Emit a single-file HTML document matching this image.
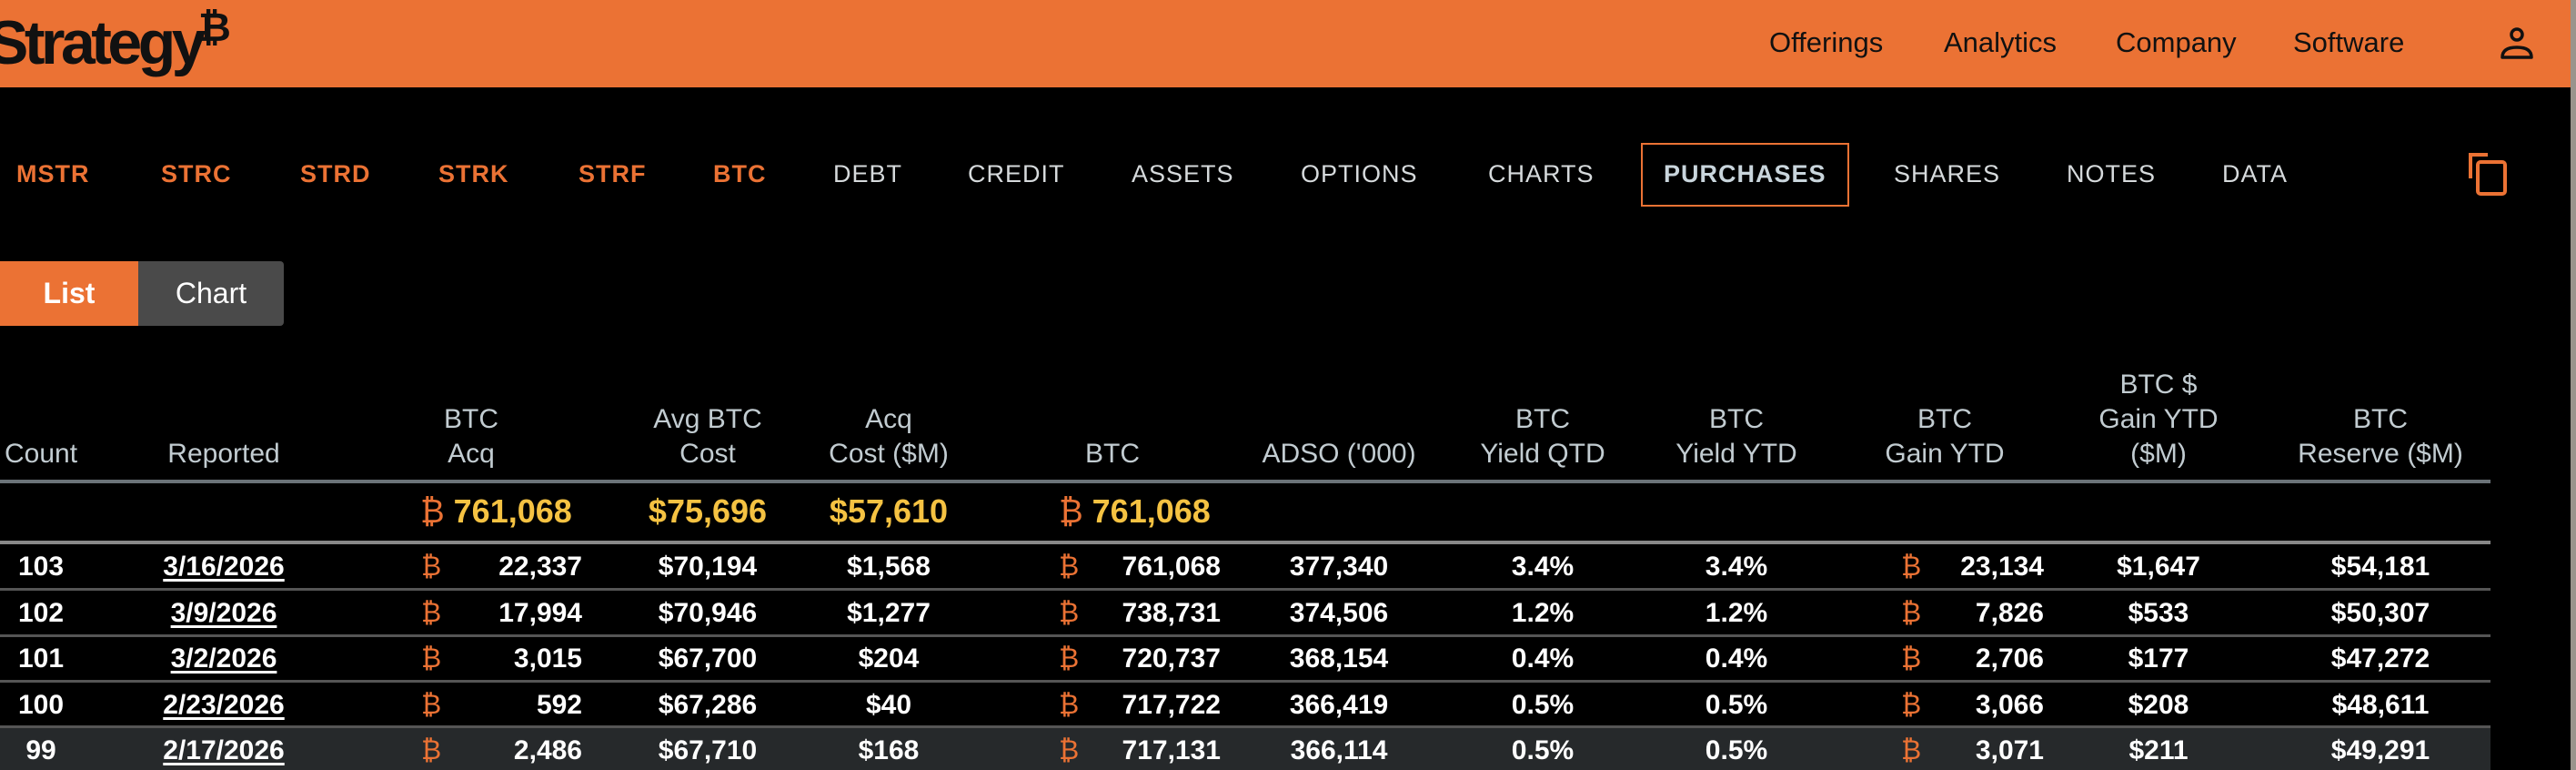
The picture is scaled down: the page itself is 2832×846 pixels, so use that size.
<!DOCTYPE html>
<html><head><meta charset="utf-8"><style>
*{margin:0;padding:0;box-sizing:border-box}
body{width:2832px;height:846px;background:#000;position:relative;overflow:hidden;font-family:"Liberation Sans",sans-serif}
.a{position:absolute;white-space:nowrap}
.c{transform:translateX(-50%);text-align:center}
.hdr{position:absolute;left:0;top:0;width:2826px;height:96px;background:#EB7234}
.nav{font-size:31px;color:#111;top:29px}
.sub{font-size:27px;top:176px;letter-spacing:1px}
.o{color:#EB7234;font-weight:bold}
.w{color:#d6dadc}
.th{font-size:30px;color:#c2ccd1;line-height:38px;text-align:center;transform:translateX(-50%)}
.tot{font-size:36px;color:#F5C242;top:541px;font-weight:bold}
.v{font-size:30px;color:#fff;font-weight:bold}
.b{color:#EB7234;font-weight:normal}
</style></head><body>
<div class="hdr"></div>
<div class="a" style="left:-14px;top:8px;font-size:68px;font-weight:bold;letter-spacing:-4.5px;color:#111">Strategy</div>
<div class="a" style="left:218px;top:6px;font-size:44px;font-weight:bold;color:#111">₿</div>
<div class="a nav" style="left:1945px">Offerings</div>
<div class="a nav" style="left:2137px">Analytics</div>
<div class="a nav" style="left:2326px">Company</div>
<div class="a nav" style="left:2521px">Software</div>
<svg class="a" style="left:2745px;top:28px" width="44" height="40" viewBox="0 0 44 40"><circle cx="22" cy="10" r="6" fill="none" stroke="#111" stroke-width="3.5"/><path d="M6 35 Q6 24 22 24 Q38 24 38 35 Z" fill="none" stroke="#111" stroke-width="3.5" stroke-linejoin="round"/></svg>
<div class="a" style="left:2826px;top:0;width:6px;height:846px;background:#9a948c"></div>

<div class="a sub o" style="left:18px">MSTR</div>
<div class="a sub o" style="left:177px">STRC</div>
<div class="a sub o" style="left:330px">STRD</div>
<div class="a sub o" style="left:482px">STRK</div>
<div class="a sub o" style="left:636px">STRF</div>
<div class="a sub o" style="left:784px">BTC</div>
<div class="a sub w" style="left:916px">DEBT</div>
<div class="a sub w" style="left:1064px">CREDIT</div>
<div class="a sub w" style="left:1244px">ASSETS</div>
<div class="a sub w" style="left:1430px">OPTIONS</div>
<div class="a sub w" style="left:1636px">CHARTS</div>
<div class="a" style="left:1804px;top:157px;width:229px;height:70px;border:2px solid #EB7234"></div>
<div class="a sub" style="left:1829px;color:#c9d5dc;font-weight:bold">PURCHASES</div>
<div class="a sub w" style="left:2082px">SHARES</div>
<div class="a sub w" style="left:2272px">NOTES</div>
<div class="a sub w" style="left:2443px">DATA</div>
<svg class="a" style="left:2712px;top:166px" width="48" height="52" viewBox="0 0 48 52"><path d="M4 30 V4 H23" fill="none" stroke="#EB7234" stroke-width="4"/><rect x="12" y="12" width="30" height="35" rx="3" fill="none" stroke="#EB7234" stroke-width="4"/></svg>

<div class="a" style="left:0;top:287px;width:152px;height:71px;background:#EB7234;color:#fff;font-size:32px;font-weight:bold;line-height:71px;text-align:center">List</div>
<div class="a" style="left:152px;top:287px;width:160px;height:71px;background:#4a4a4a;color:#fff;font-size:32px;line-height:71px;text-align:center;border-radius:0 4px 4px 0">Chart</div>

<div class="a th" style="left:45px;top:480px">Count</div>
<div class="a th" style="left:246px;top:480px">Reported</div>
<div class="a th" style="left:518px;top:442px">BTC<br>Acq</div>
<div class="a th" style="left:778px;top:442px">Avg BTC<br>Cost</div>
<div class="a th" style="left:977px;top:442px">Acq<br>Cost ($M)</div>
<div class="a th" style="left:1223px;top:480px">BTC</div>
<div class="a th" style="left:1472px;top:480px">ADSO ('000)</div>
<div class="a th" style="left:1696px;top:442px">BTC<br>Yield QTD</div>
<div class="a th" style="left:1909px;top:442px">BTC<br>Yield YTD</div>
<div class="a th" style="left:2138px;top:442px">BTC<br>Gain YTD</div>
<div class="a th" style="left:2373px;top:404px">BTC $<br>Gain YTD<br>($M)</div>
<div class="a th" style="left:2617px;top:442px">BTC<br>Reserve ($M)</div>
<div class="a" style="left:0;top:527px;width:2738px;height:4px;background:#6b7378"></div>

<div class="a tot" style="left:462px"><span class="b">₿</span> 761,068</div>
<div class="a tot c" style="left:778px">$75,696</div>
<div class="a tot c" style="left:977px">$57,610</div>
<div class="a tot" style="left:1164px"><span class="b">₿</span> 761,068</div>
<div class="a" style="left:0;top:594px;width:2738px;height:4px;background:#888"></div>

<div class="a" style="left:0;top:646px;width:2738px;height:3px;background:#555"></div>
<div class="a" style="left:0;top:697px;width:2738px;height:3px;background:#555"></div>
<div class="a" style="left:0;top:747px;width:2738px;height:3px;background:#555"></div>
<div class="a" style="left:0;top:797px;width:2738px;height:49px;background:#26292b;border-top:3px solid #555"></div>

<div id="rows"></div>
<script>
var d=[["103","3/16/2026","22,337","$70,194","$1,568","761,068","377,340","3.4%","3.4%","23,134","$1,647","$54,181"],
["102","3/9/2026","17,994","$70,946","$1,277","738,731","374,506","1.2%","1.2%","7,826","$533","$50,307"],
["101","3/2/2026","3,015","$67,700","$204","720,737","368,154","0.4%","0.4%","2,706","$177","$47,272"],
["100","2/23/2026","592","$67,286","$40","717,722","366,419","0.5%","0.5%","3,066","$208","$48,611"],
["99","2/17/2026","2,486","$67,710","$168","717,131","366,114","0.5%","0.5%","3,071","$211","$49,291"]];
var h="";
d.forEach(function(r,i){var t=606+i*50.5;
function c(x,s,ex){h+='<div class="a v c" style="left:'+x+'px;top:'+t+'px;'+(ex||'')+'">'+s+'</div>';}
function rr(e,s){h+='<div class="a v" style="right:'+(2832-e)+'px;top:'+t+'px">'+s+'</div>';}
function bt(x){h+='<div class="a v b" style="left:'+x+'px;top:'+t+'px">₿</div>';}
c(45,r[0]);c(246,r[1],'text-decoration:underline;text-underline-offset:4px');
bt(463);rr(640,r[2]);c(778,r[3]);c(977,r[4]);bt(1164);rr(1342,r[5]);c(1472,r[6]);c(1696,r[7]);c(1909,r[8]);
bt(2090);rr(2247,r[9]);c(2373,r[10]);c(2617,r[11]);});
document.getElementById("rows").innerHTML=h;
</script>
</body></html>
